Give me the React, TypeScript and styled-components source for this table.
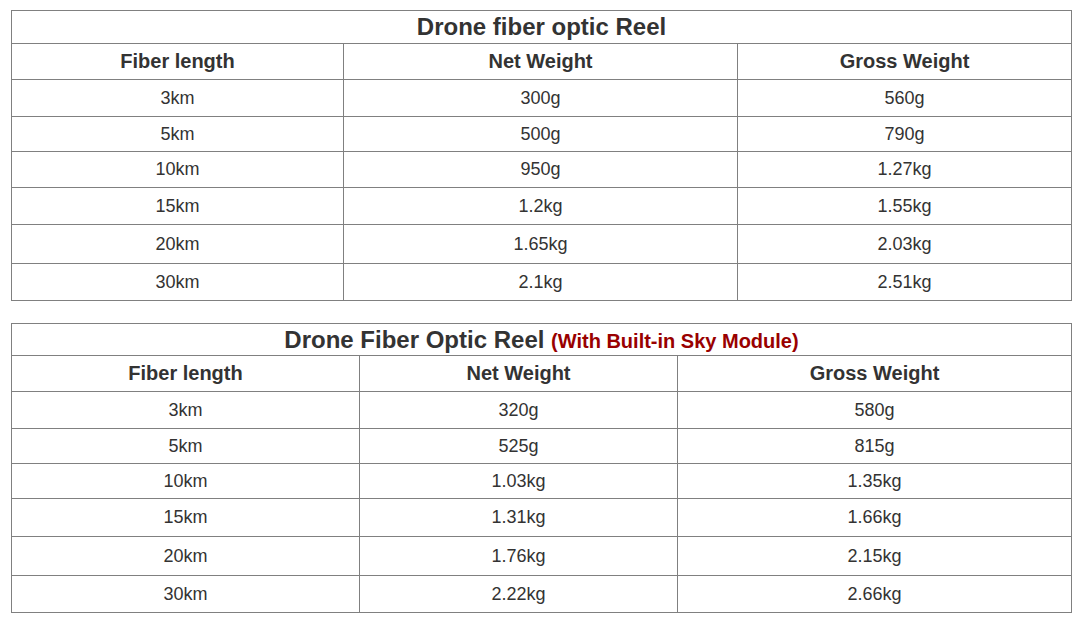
import * as React from 'react'
import styled, { createGlobalStyle } from 'styled-components'

const GlobalStyle = createGlobalStyle`
  body {
    margin: 0;
    background: #fff;
    font-family: "Liberation Sans", Arial, sans-serif;
    color: #333;
  }
`

const Page = styled.div`
  display: flex;
  flex-direction: column;
  gap: 22px;
  padding: 10px 0 0 11px;
`

const Table = styled.table`
  width: 1060px;
  table-layout: fixed;
  border-collapse: collapse;
  border: 1px solid #808080;
`

const TitleCell = styled.th<{ $h: number }>`
  height: ${p => p.$h}px;
  padding: 0;
  border: 1px solid #808080;
  font-size: 24px;
  font-weight: bold;
  color: #333;
  text-align: center;
  vertical-align: middle;
`

const Note = styled.span`
  font-size: 20px;
  color: #990000;
`

const HeadCell = styled.th`
  height: 35px;
  padding: 0;
  border: 1px solid #808080;
  font-size: 20px;
  font-weight: bold;
  color: #333;
  text-align: center;
  vertical-align: middle;
`

const Cell = styled.td<{ $h: number }>`
  height: ${p => p.$h}px;
  padding: 0;
  border: 1px solid #808080;
  font-size: 18px;
  color: #333;
  text-align: center;
  vertical-align: middle;
`

type Spec = {
  title: React.ReactNode
  titleH: number
  cols: number[]
  rows: string[][]
  heights: number[]
}

const heads = ['Fiber length', 'Net Weight', 'Gross Weight']

const tables: Spec[] = [
  {
    title: 'Drone fiber optic Reel',
    titleH: 32,
    cols: [332, 394, 334],
    heights: [36, 34, 35, 36, 38, 36],
    rows: [
      ['3km', '300g', '560g'],
      ['5km', '500g', '790g'],
      ['10km', '950g', '1.27kg'],
      ['15km', '1.2kg', '1.55kg'],
      ['20km', '1.65kg', '2.03kg'],
      ['30km', '2.1kg', '2.51kg'],
    ],
  },
  {
    title: (
      <>
        Drone Fiber Optic Reel <Note>(With Built-in Sky Module)</Note>
      </>
    ),
    titleH: 31,
    cols: [348, 318, 394],
    heights: [36, 34, 34, 37, 38, 36],
    rows: [
      ['3km', '320g', '580g'],
      ['5km', '525g', '815g'],
      ['10km', '1.03kg', '1.35kg'],
      ['15km', '1.31kg', '1.66kg'],
      ['20km', '1.76kg', '2.15kg'],
      ['30km', '2.22kg', '2.66kg'],
    ],
  },
]

const ReelTable: React.FC<{ spec: Spec }> = ({ spec }) => (
  <Table>
    <colgroup>
      {spec.cols.map((w, i) => (
        <col key={i} style={{ width: w }} />
      ))}
    </colgroup>
    <thead>
      <tr>
        <TitleCell colSpan={3} $h={spec.titleH}>{spec.title}</TitleCell>
      </tr>
      <tr>
        {heads.map(h => (
          <HeadCell key={h}>{h}</HeadCell>
        ))}
      </tr>
    </thead>
    <tbody>
      {spec.rows.map((r, i) => (
        <tr key={i}>
          {r.map((v, j) => (
            <Cell key={j} $h={spec.heights[i]}>{v}</Cell>
          ))}
        </tr>
      ))}
    </tbody>
  </Table>
)

const App: React.FC = () => (
  <>
    <GlobalStyle />
    <Page>
      {tables.map((t, i) => (
        <ReelTable key={i} spec={t} />
      ))}
    </Page>
  </>
)

export default App
